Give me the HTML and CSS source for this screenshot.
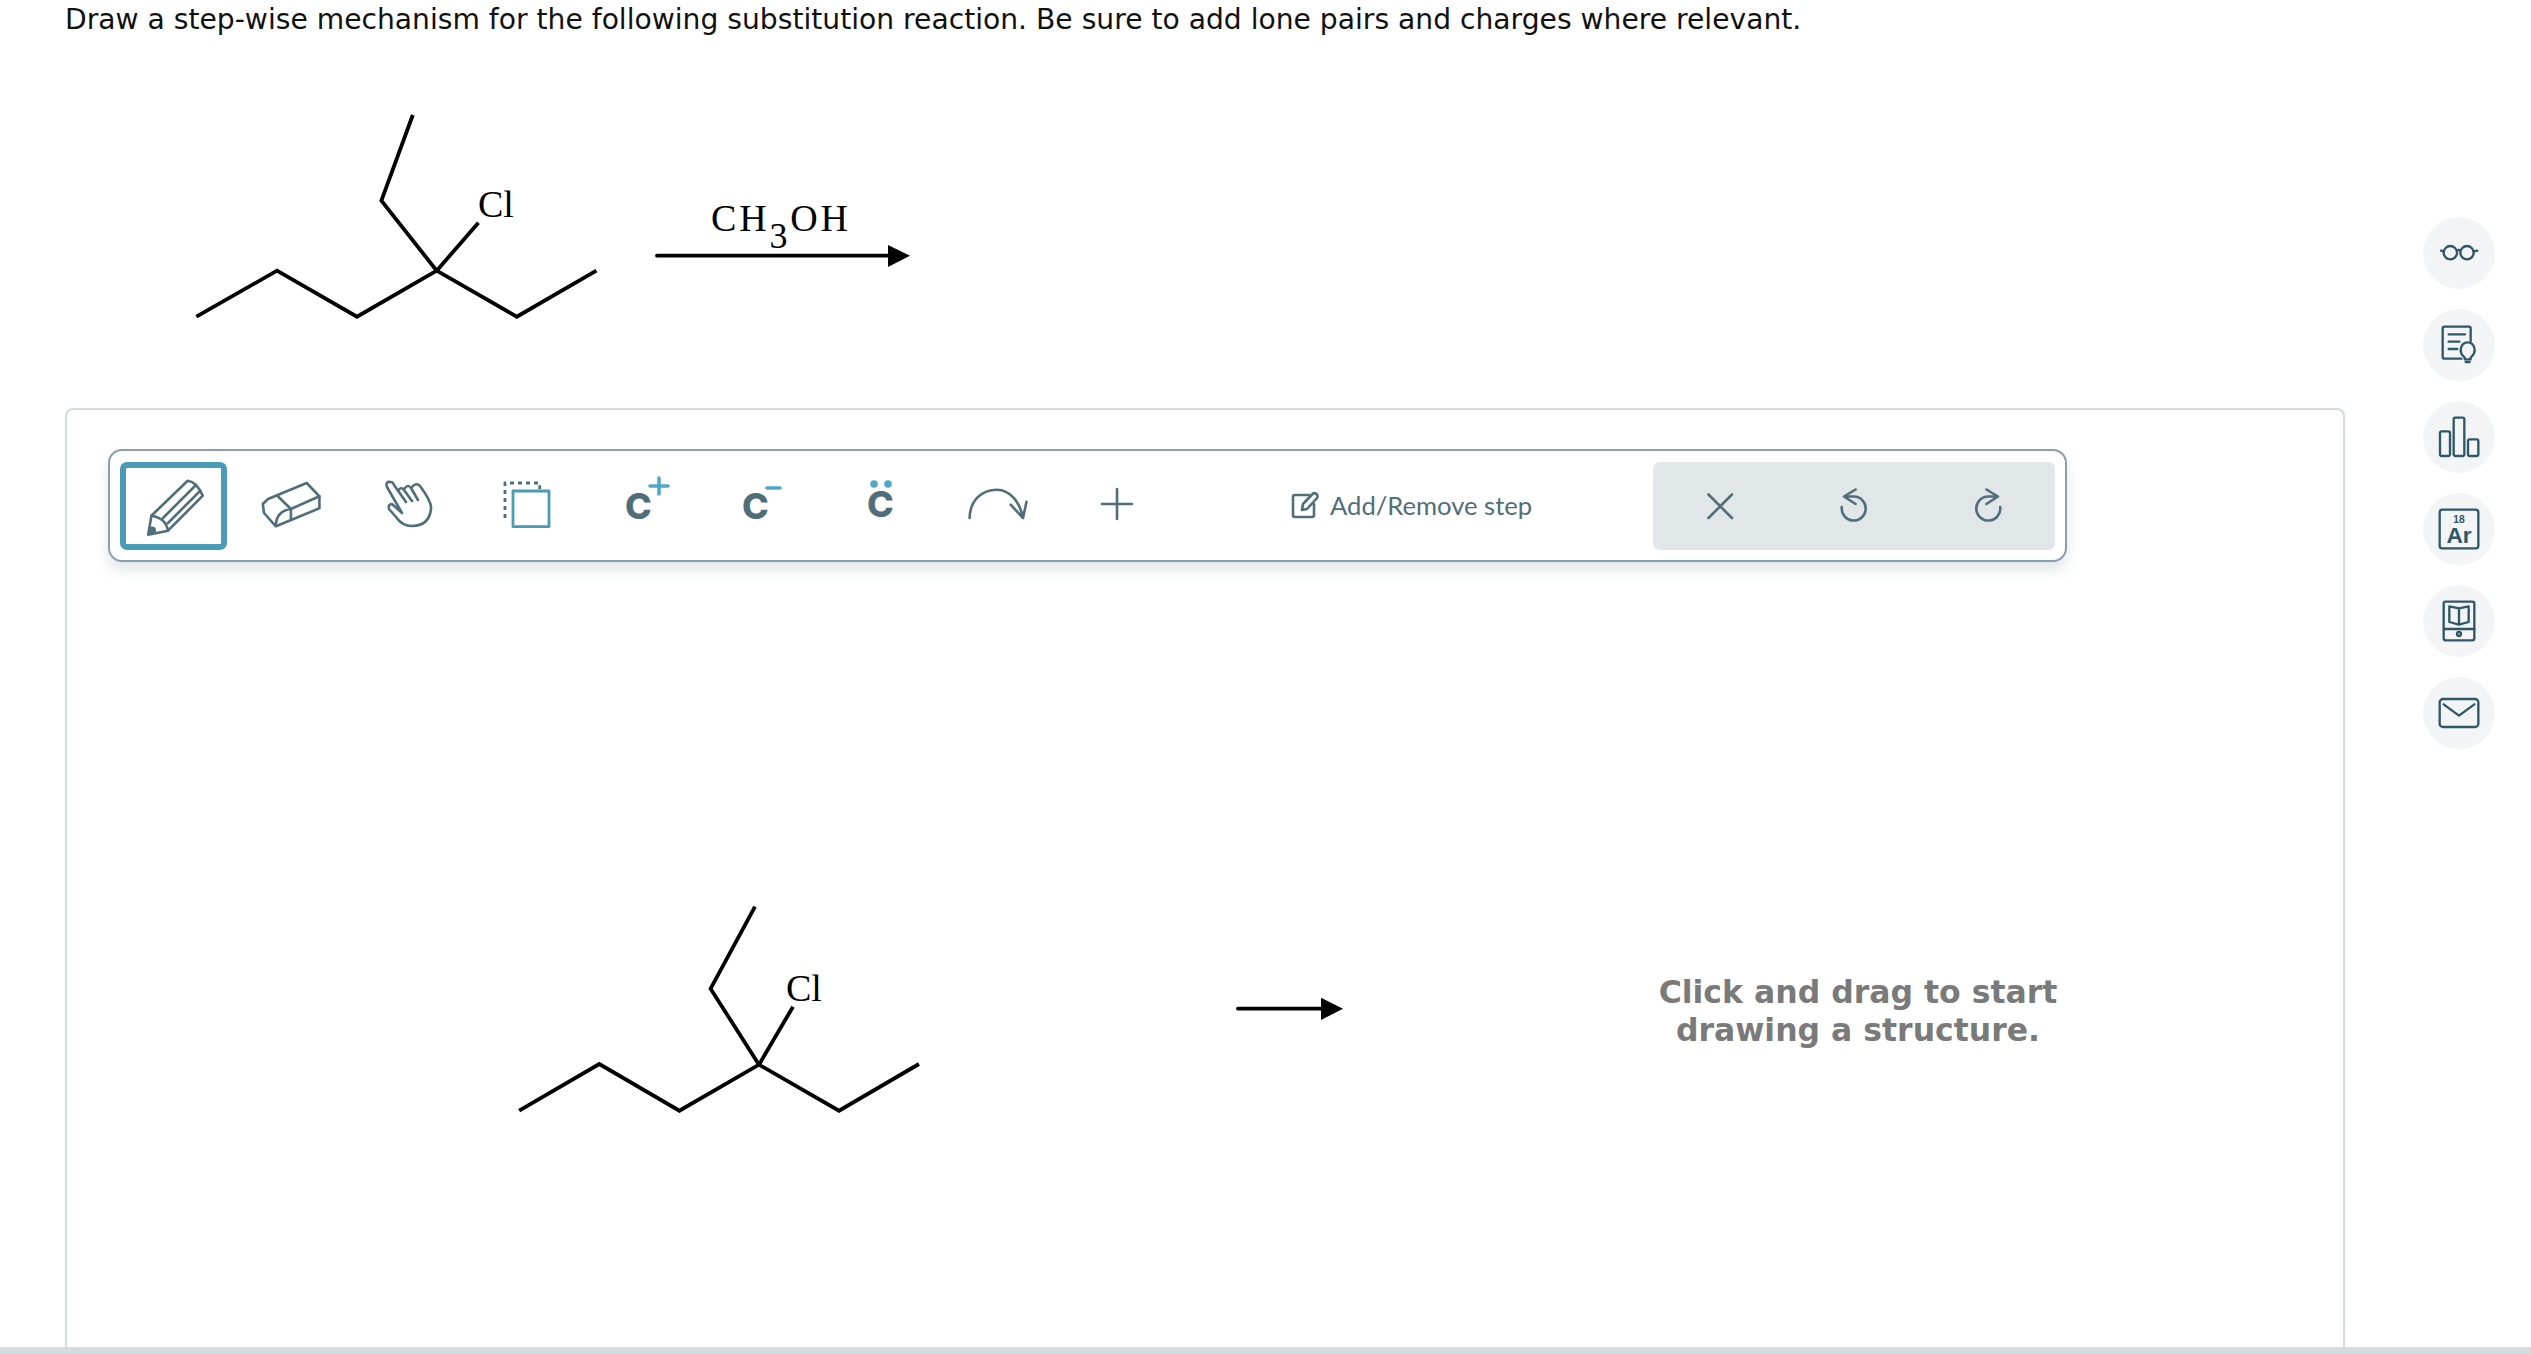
FILE: index.html
```html
<!DOCTYPE html>
<html lang="en">
<head>
<meta charset="utf-8">
<title>Step-wise mechanism</title>
<link rel="stylesheet" href="styles.css">
</head>
<body>
<div class="page">
  <main class="content">
    <p class="prompt">Draw a step-wise mechanism for the following substitution reaction. Be sure to add lone pairs and charges where relevant.</p>
    <svg class="reaction" width="2280" height="370" viewBox="65 38 2280 370">
      <polyline class="bond" points="196.4,316.7 277,270.7 357,316.7 436.7,270.7 516.8,316.7 596.4,270.7"/>
      <polyline class="bond" points="436.7,270.7 381.4,200.7 412.8,115"/>
      <line class="bond" x1="436.7" y1="270.7" x2="478.4" y2="222.7"/>
      <text class="chem" x="478" y="217">Cl</text>
      <text class="chem spaced" x="711" y="231">CH<tspan class="sub" dy="17">3</tspan><tspan dy="-17">OH</tspan></text>
      <line class="arrow-line" x1="657" y1="255.7" x2="890" y2="255.7"/>
      <polygon class="arrow-head" points="888,245 910,255.7 888,267"/>
    </svg>
    <section class="panel">
      <div class="toolbar">
        <div class="tool tool-active">
          <svg class="tool-icon" width="80" height="80" viewBox="133 467 80 80">
            <path class="ic" d="M151.4 516.7L187.7 481.7Q197 483 202.8 496.7L168 531.7L148.2 535.7Z"/>
            <path class="ic" d="M163 519L196 486M168 524L200 492M151.4 516.7Q166 519 168 531.7"/>
            <circle class="ic-fill" cx="152" cy="531.5" r="4"/>
          </svg>
        </div>
        <div class="tool">
          <svg class="tool-icon" width="80" height="80" viewBox="251 467 80 80">
            <path class="ic" d="M262.8 505L268 500L306.7 484L319.4 497.3V509.3L275.9 527.3L264 514Z"/>
            <path class="ic" d="M277.9 497.3L290.9 510L319.4 497.3M290.9 510Q277 512 275.9 525M290.9 510V520.5"/>
          </svg>
        </div>
        <div class="tool">
          <svg class="tool-icon" width="80" height="80" viewBox="369 467 80 80">
            <path class="ic" d="M402 514L387 488Q385 482 391 483Q393 483 394 486L406 503M398 492Q401 487 404 491L412 502M405 489Q408 485 411 489L418 501M412 488Q416 483 420 487Q432 503 431 510Q429 527 412 527Q402 527 396 518L389 510Q388 505 392 505L402 514"/>
          </svg>
        </div>
        <div class="tool">
          <svg class="tool-icon" width="80" height="80" viewBox="488 467 80 80">
            <path class="ic-dash" d="M506 519V484H540.7V491"/>
            <rect class="ic-blue" x="514" y="492" width="36" height="35.7"/>
          </svg>
        </div>
        <div class="tool">
          <svg class="tool-icon" width="80" height="80" viewBox="605 467 80 80">
            <text class="atom" x="625" y="520">C</text>
            <path class="ic-accent" d="M659 479V495M650 487H668"/>
          </svg>
        </div>
        <div class="tool">
          <svg class="tool-icon" width="80" height="80" viewBox="724 467 80 80">
            <text class="atom" x="743" y="520">C</text>
            <path class="ic-accent" d="M768 489H781"/>
          </svg>
        </div>
        <div class="tool">
          <svg class="tool-icon" width="80" height="80" viewBox="842 467 80 80">
            <text class="atom" x="868" y="518">C</text>
            <circle class="dot" cx="875" cy="485" r="3.8"/>
            <circle class="dot" cx="889" cy="485" r="3.8"/>
          </svg>
        </div>
        <div class="tool">
          <svg class="tool-icon" width="80" height="80" viewBox="960 467 80 80">
            <path class="ic" d="M970.6 519C971 501 983 490.7 998 490.7C1011 490.7 1021 503 1024 519M1011.7 505.7L1024 519L1027.5 502.7"/>
          </svg>
        </div>
        <div class="tool">
          <svg class="tool-icon" width="80" height="80" viewBox="1077 467 80 80">
            <path class="ic" d="M1117 490V520M1102 505H1132"/>
          </svg>
        </div>
        <div class="step-action">
          <svg class="step-icon" width="28" height="30" viewBox="1292 490 28 30">
            <path class="ic" d="M1310 494H1296Q1294 494 1294 496V514Q1294 516 1296 516H1313Q1315 516 1315 514V503"/>
            <path class="ic" d="M1303 509L1304 503L1314 492.5Q1316 491.500 1318 493.500Q1319 495.500 1318 497L1308 508Z"/>
          </svg>
          <span class="step-label">Add/Remove step</span>
        </div>
        <div class="history">
          <div class="history-cell">
            <svg width="40" height="40" viewBox="1700 485 40 40"><path class="ic" d="M1708.500 493.500L1732 517M1732 493.500L1708.500 517"/></svg>
          </div>
          <div class="history-cell">
            <svg width="40" height="40" viewBox="1834 487 40 40"><path class="ic" d="M1855.600 490.500L1844 497.500L1855.600 505M1844 497.500H1853.500A12 12 0 1 1 1841.800 508"/></svg>
          </div>
          <div class="history-cell">
            <svg width="40" height="40" viewBox="1967 487 40 40"><path class="ic" d="M1985.400 490.500L1997 497.500L1985.400 505M1997 497.500H1987.500A12 12 0 1 0 1999.200 508"/></svg>
          </div>
        </div>
      </div>
      <div class="canvas">
        <svg class="canvas-art" width="2276" height="785" viewBox="67 562 2276 785">
          <polyline class="bond" points="519.200,1110.700 599.300,1064 679.400,1110.700 759,1064.700 839,1110.700 919,1064"/>
          <polyline class="bond" points="759,1064.700 710.600,988.700 755,906.700"/>
          <line class="bond" x1="759" y1="1064.700" x2="793" y2="1006.700"/>
          <text class="chem" x="786" y="1001">Cl</text>
          <line class="arrow-line" x1="1238" y1="1008.700" x2="1323" y2="1008.700"/>
          <polygon class="arrow-head" points="1321,997.700 1343,1008.700 1321,1020"/>
        </svg>
        <p class="hint">Click and drag to start<br>drawing a structure.</p>
      </div>
    </section>
  </main>
  <aside class="rail">
    <div class="rail-btn"><svg width="72" height="72" viewBox="69 51 216 216"><circle class="rl" cx="151" cy="158" r="20"/><circle class="rl" cx="201" cy="158" r="20"/><path class="rl" d="M171 152Q176 148 181 152M123 152L132 154M232 152L221 154"/></svg></div>
    <div class="rail-btn"><svg width="72" height="72" viewBox="69 327 216 216"><path class="rl" d="M184 476H133Q128 476 128 471V385Q128 380 133 380H207Q212 380 212 385V424M146 403H195M146 425H178M146 447H172"/><path class="rl" d="M194 472C172 455 184 427 203 427C222 427 234 455 212 472V478H194Z"/><path class="rl" d="M197 486H209"/></svg></div>
    <div class="rail-btn"><svg width="72" height="72" viewBox="69 603 216 216"><rect class="rl" x="120" y="694" width="30" height="74" rx="5"/><rect class="rl" x="161" y="653" width="32" height="115" rx="5"/><rect class="rl" x="204" y="718" width="31" height="50" rx="5"/></svg></div>
    <div class="rail-btn"><svg width="72" height="72" viewBox="69 69 216 216"><rect class="rl" x="119" y="119" width="116" height="116" rx="8"/><text class="ar-num" x="177" y="160">18</text><text class="ar-sym" x="177" y="218">Ar</text></svg></div>
    <div class="rail-btn"><svg width="72" height="72" viewBox="69 345 216 216"><rect class="rl" x="131" y="395" width="92" height="116" rx="6"/><path class="rl" d="M131 477H223M148 409L177 415L206 409V456L177 464L148 456ZM177 415V464"/><circle class="rl" cx="177" cy="492" r="6"/></svg></div>
    <div class="rail-btn"><svg width="72" height="72" viewBox="69 621 216 216"><rect class="rl" x="119" y="687" width="116" height="84" rx="10"/><path class="rl" d="M131 703L177 737L223 703"/></svg></div>
  </aside>
</div>
<div class="bottom-bar"></div>
</body>
</html>
```
FILE: styles.css
```css
*, *::before { box-sizing: border-box; }
html, body { margin: 0; padding: 0; background: #fff; }
body { height: 1354px; overflow: hidden; }
svg { display: block; }

.page { display: flex; height: 1347px; overflow: hidden; padding-left: 65px; }
.content { width: 2280px; flex: none; }
.prompt {
  margin: 0;
  height: 38px;
  padding-top: 1px;
  line-height: 38px;
  font-family: "DejaVu Sans", sans-serif;
  font-size: 28.180px;
  color: #111;
  white-space: nowrap;
}
.reaction { height: 370px; }

.bond { fill: none; stroke: #000; stroke-width: 3.800; stroke-linejoin: miter; }
.arrow-line { stroke: #000; stroke-width: 3.800; stroke-linecap: round; }
.arrow-head { fill: #000; }
.chem { font-family: "Liberation Serif", serif; font-size: 38px; fill: #000; }
.spaced { letter-spacing: 2.800px; }
.sub { font-size: 36px; }

.panel {
  height: 939px;
  border: 2px solid #d3dbde;
  border-bottom: 0;
  border-radius: 8px 8px 0 0;
  padding: 39px 0 0 41px;
}
.toolbar {
  display: flex;
  align-items: center;
  width: 1959px;
  height: 113px;
  padding: 1px 9px 0 4px;
  border: 2px solid #8aa0a8;
  border-radius: 14px;
  background: #fff;
  box-shadow: 0 8px 14px rgba(90, 115, 125, .18);
}
.tool { width: 118px; height: 88px; flex: none; display: flex; align-items: center; justify-content: center; position: relative; }
.tool-active::before {
  content: "";
  position: absolute;
  left: 6px;
  top: 0;
  width: 107px;
  height: 88px;
  border: 6px solid #4a9bb5;
  border-radius: 7px;
}
.ic { fill: none; stroke: #4f6e7a; stroke-width: 2.600; stroke-linecap: round; stroke-linejoin: round; }
.ic-fill { fill: #4f6e7a; }
.ic-dash { fill: none; stroke: #4f6e7a; stroke-width: 2.800; stroke-dasharray: 4 4; }
.ic-blue { fill: none; stroke: #4a9bb5; stroke-width: 2.800; stroke-linejoin: round; }
.ic-accent { fill: none; stroke: #4fa8c7; stroke-width: 3.600; stroke-linecap: round; }
.dot { fill: #4fa8c7; }
.atom { font-family: "Inter", sans-serif; font-weight: 800; font-size: 36px; fill: #4f6e7a; }

.step-action { display: flex; align-items: center; gap: 11px; margin-left: 115px; width: 362px; flex: none; }
.step-label { font-family: "Lato", sans-serif; font-size: 25.600px; color: #4f6e7a; white-space: nowrap; position: relative; top: -1px; }

.history { display: flex; width: 402px; height: 88px; flex: none; border-radius: 7px; background: #e1e6e9; }
.history-cell { flex: 1; display: flex; align-items: center; justify-content: center; }

.canvas { position: relative; margin-left: -41px; }
.hint {
  position: absolute;
  left: 1591px;
  top: 411px;
  width: 400px;
  margin: 0;
  text-align: center;
  font-family: "DejaVu Sans", sans-serif;
  font-weight: 700;
  font-size: 31.500px;
  line-height: 38px;
  color: #7a7a7a;
  white-space: nowrap;
}

.rail { display: flex; flex-direction: column; gap: 20px; margin-left: 78px; padding-top: 217px; flex: none; }
.rail-btn { width: 72px; height: 72px; border-radius: 50%; background: #f2f4f6; }
.rl { fill: none; stroke: #2f5768; stroke-width: 7; stroke-linecap: round; stroke-linejoin: round; }
.ar-num { font-family: "Liberation Sans", sans-serif; font-weight: 700; font-size: 31px; fill: #2f5768; text-anchor: middle; }
.ar-sym { font-family: "Liberation Sans", sans-serif; font-weight: 700; font-size: 68px; fill: #2f5768; text-anchor: middle; }

.bottom-bar { height: 7px; background: #d3dbde; }
```
